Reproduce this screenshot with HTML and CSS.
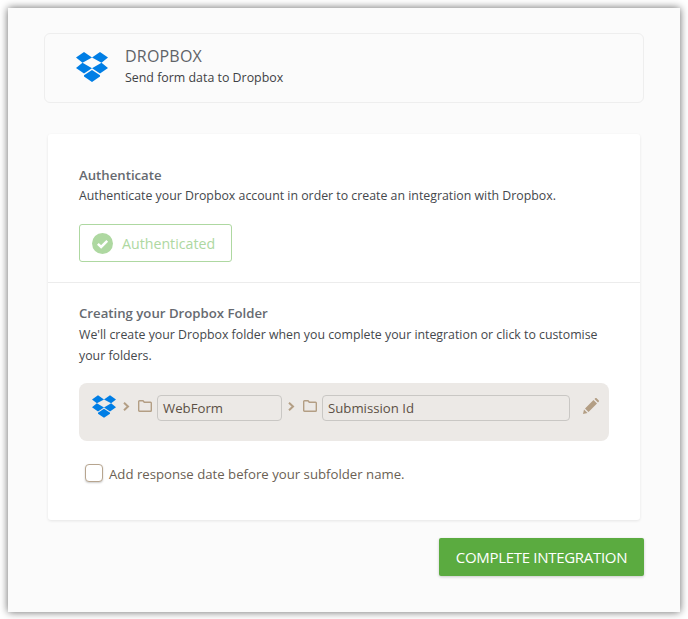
FILE: index.html
```html
<!DOCTYPE html>
<html lang="en">
<head>
<meta charset="utf-8">
<title>Dropbox integration</title>
<link rel="stylesheet" href="styles.css">
</head>
<body>
<svg class="defs" width="0" height="0" aria-hidden="true">
  <symbol id="dbx" viewBox="0 0 32 30">
    <path d="M8 0 0 5.500 6.500 10.800 16 5.500ZM24 0 32 5.500 25.500 10.800 16 5.500ZM0 16 8 21.500 16 16.200 6.500 10.800ZM32 16 24 21.500 16 16.200 25.500 10.800ZM16 18 8 23.200 8 24.500 16 30 24 24.500 24 23.200Z"/>
  </symbol>
  <symbol id="folder" viewBox="0 0 14 12">
    <path d="M.7 1.500C.7 1 1 .7 1.500.7H5L6.300 2.300H12.500C13 2.300 13.300 2.600 13.300 3.100V10.500C13.300 11 13 11.300 12.500 11.300H1.500C1 11.300 .7 11 .7 10.500Z" fill="none" stroke="currentColor" stroke-width="1.400"/>
  </symbol>
  <symbol id="chev" viewBox="0 0 7 9">
    <path d="M1 .8 5 4.500 1 8.200" fill="none" stroke="currentColor" stroke-width="2"/>
  </symbol>
</svg>
<main class="window">
  <header class="head">
    <svg class="head-logo"><use href="#dbx"/></svg>
    <div class="head-text">
      <h1 class="head-title">DROPBOX</h1>
      <p class="head-sub">Send form data to Dropbox</p>
    </div>
  </header>
  <section class="card">
    <div class="sec sec-auth">
      <h2 class="sec-title">Authenticate</h2>
      <p class="sec-text">Authenticate your Dropbox account in order to create an integration with Dropbox.</p>
      <div class="auth-btn">
        <svg class="auth-icon" viewBox="0 0 20 20"><circle cx="10" cy="10" r="10" fill="#aed8a1"/><path d="M5.600 10.300 8.700 13.300 14.500 7.500" fill="none" stroke="#fff" stroke-width="2.400"/></svg>
        <span>Authenticated</span>
      </div>
    </div>
    <div class="sec sec-folder">
      <h2 class="sec-title">Creating your Dropbox Folder</h2>
      <p class="sec-text sec-long">We'll create your Dropbox folder when you complete your integration or click to customise your folders.</p>
      <div class="path">
        <svg class="path-logo"><use href="#dbx"/></svg>
        <svg class="chev"><use href="#chev"/></svg>
        <svg class="folder"><use href="#folder"/></svg>
        <div class="field field-a">WebForm</div>
        <svg class="chev"><use href="#chev"/></svg>
        <svg class="folder"><use href="#folder"/></svg>
        <div class="field field-b">Submission Id</div>
        <svg class="pencil" viewBox="0 0 16 16"><path d="M0 16 1 11.500 4.500 15ZM2 10.500 10.500 2 14 5.500 5.500 14ZM11.500 1 12.500 0C13 -.2 13.300 0 13.600 .2L15.800 2.400C16 2.700 16.100 3 15.900 3.400L15 4.500Z" fill="currentColor"/></svg>
      </div>
      <label class="check">
        <span class="box"></span>
        <span class="check-text">Add response date before your subfolder name.</span>
      </label>
    </div>
  </section>
  <footer class="foot">
    <button class="complete" type="button">COMPLETE INTEGRATION</button>
  </footer>
</main>
</body>
</html>
```

FILE: styles.css
```css
* { box-sizing: border-box; }
html, body { margin: 0; padding: 0; background: #fff; }
body {
  padding: 8px;
  width: 688px;
  height: 619px;
  overflow: hidden;
  font-family: "Open Sans", "Noto Sans", sans-serif;
}
.defs { position: absolute; }
.window {
  width: 672px;
  height: 604px;
  padding: 25px 36px 0;
  background: #fbfbfb;
  box-shadow: 0 0 8px rgba(0, 0, 0, .6);
}
.head {
  height: 70px;
  display: flex;
  align-items: center;
  padding-left: 31px;
  border: 1px solid #eeeeee;
  border-radius: 6px;
}
.head-logo { width: 32px; height: 30px; fill: #007ee5; margin-right: 17px; margin-top: -3px; }
.head-title { margin: 0; font-size: 16px; line-height: 20px; font-weight: 400; color: #5f6368; letter-spacing: .2px; }
.head-sub { margin: 3px 0 0; font-size: 12.4px; line-height: 18px; color: #3f4245; }
.head-text { margin-top: -4px; }
.card {
  width: 592px;
  height: 386px;
  margin: 31px 0 0 4px;
  background: #fff;
  border-radius: 3px;
  box-shadow: 0 1px 3px rgba(0, 0, 0, .09);
}
.sec { padding: 0 31px; }
.sec-auth { height: 149px; padding-top: 32px; border-bottom: 1px solid #ececec; }
.sec-folder { padding-top: 21px; }
.sec-title { margin: 0; font-size: 13.2px; line-height: 18px; font-weight: 600; color: #666a70; }
.sec-text { margin: 3px 0 0; font-size: 12.34px; line-height: 18px; color: #45484c; }
.sec-long { margin-top: 2px; line-height: 21px; }
.auth-btn {
  width: 153px;
  height: 38px;
  margin-top: 19px;
  display: flex;
  align-items: center;
  gap: 9px;
  padding-left: 12px;
  border: 1px solid #aed8a1;
  border-radius: 3px;
  font-size: 14.2px;
  color: #aed8a1;
}
.auth-icon { width: 21px; height: 21px; flex: none; }
.path {
  width: 530px;
  height: 58px;
  margin-top: 17px;
  padding: 0 0 8px 13px;
  display: flex;
  align-items: center;
  background: #ece9e6;
  border-radius: 8px;
  color: #b39e84;
}
.path-logo { width: 24px; height: 23px; fill: #007ee5; margin: -4px 1px 0 0; flex: none; }
.chev { width: 7px; height: 9px; margin: -4px 8px 0 6px; flex: none; }
.folder { width: 14px; height: 12px; margin: -4px 5px 0 0; flex: none; }
.field {
  flex: none;
  height: 26px;
  line-height: 24px;
  padding-left: 5px;
  border: 1px solid #c9c7c4;
  border-radius: 4px;
  font-size: 13.2px;
  color: #5c5045;
}
.field-a { width: 125px; }
.field-b { width: 248px; }
.pencil { width: 16px; height: 16px; margin: -4px 0 0 13px; flex: none; }
.check {
  display: flex;
  align-items: flex-start;
  gap: 6px;
  margin: 23px 0 0 6px;
  font-size: 13.2px;
  color: #6b5f54;
}
.check-text { line-height: 20px; }
.box {
  width: 18px;
  height: 18px;
  background: #fff;
  border: 1px solid #b7a58f;
  border-radius: 4px;
  box-shadow: 0 1px 2px rgba(0, 0, 0, .2);
}
.foot { display: flex; justify-content: flex-end; margin-top: 18px; }
.complete {
  width: 205px;
  height: 38px;
  padding: 0;
  border: 0;
  border-radius: 2px;
  background: #5bab40;
  box-shadow: 0 1px 3px rgba(0, 0, 0, .2);
  color: #fff;
  font: 400 15px "Open Sans", "Noto Sans", sans-serif;
  letter-spacing: -.3px;
}
```
